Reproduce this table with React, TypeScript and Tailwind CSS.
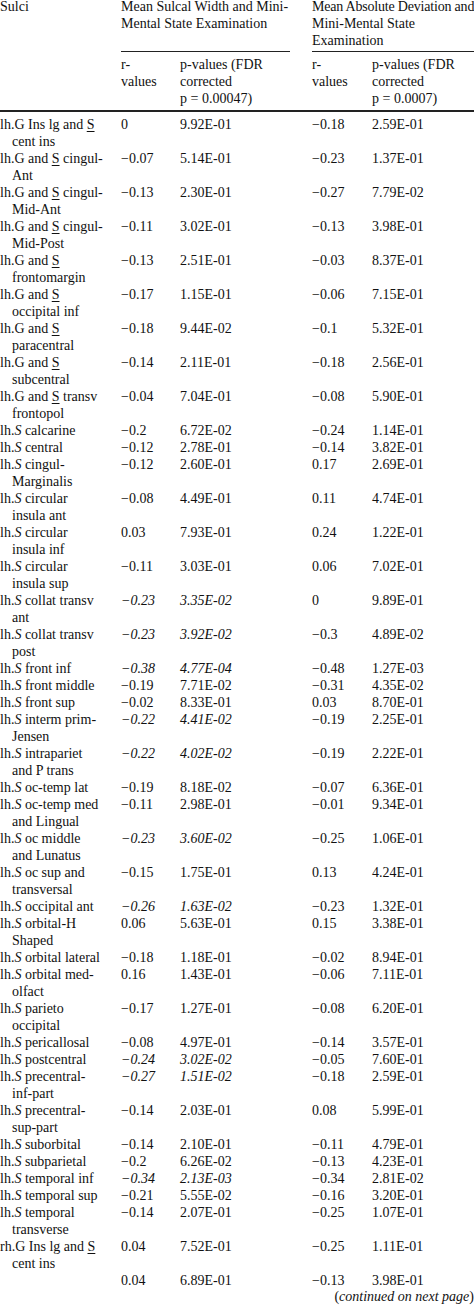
import React from "react";

type Row = { l1: React.ReactNode; l2?: string; v: [string, string, string, string]; it?: boolean };

const g = (hemi: string, before: string, after: string, l2?: string) => ({
  l1: (
    <>
      {hemi}.G {before}
      <span className="underline underline-offset-2">S</span>
      {after}
    </>
  ),
  l2,
});

const s = (rest: string, l2?: string) => ({
  l1: (
    <>
      lh.<span className="italic">S</span> {rest}
    </>
  ),
  l2,
});

const M = "\u2212";

const rows: Row[] = [
  { ...g("lh", "Ins lg and ", "", "cent ins"), v: ["0", "9.92E-01", `${M}0.18`, "2.59E-01"] },
  { ...g("lh", "and ", " cingul-", "Ant"), v: [`${M}0.07`, "5.14E-01", `${M}0.23`, "1.37E-01"] },
  { ...g("lh", "and ", " cingul-", "Mid-Ant"), v: [`${M}0.13`, "2.30E-01", `${M}0.27`, "7.79E-02"] },
  { ...g("lh", "and ", " cingul-", "Mid-Post"), v: [`${M}0.11`, "3.02E-01", `${M}0.13`, "3.98E-01"] },
  { ...g("lh", "and ", "", "frontomargin"), v: [`${M}0.13`, "2.51E-01", `${M}0.03`, "8.37E-01"] },
  { ...g("lh", "and ", "", "occipital inf"), v: [`${M}0.17`, "1.15E-01", `${M}0.06`, "7.15E-01"] },
  { ...g("lh", "and ", "", "paracentral"), v: [`${M}0.18`, "9.44E-02", `${M}0.1`, "5.32E-01"] },
  { ...g("lh", "and ", "", "subcentral"), v: [`${M}0.14`, "2.11E-01", `${M}0.18`, "2.56E-01"] },
  { ...g("lh", "and ", " transv", "frontopol"), v: [`${M}0.04`, "7.04E-01", `${M}0.08`, "5.90E-01"] },
  { ...s("calcarine"), v: [`${M}0.2`, "6.72E-02", `${M}0.24`, "1.14E-01"] },
  { ...s("central"), v: [`${M}0.12`, "2.78E-01", `${M}0.14`, "3.82E-01"] },
  { ...s("cingul-", "Marginalis"), v: [`${M}0.12`, "2.60E-01", "0.17", "2.69E-01"] },
  { ...s("circular", "insula ant"), v: [`${M}0.08`, "4.49E-01", "0.11", "4.74E-01"] },
  { ...s("circular", "insula inf"), v: ["0.03", "7.93E-01", "0.24", "1.22E-01"] },
  { ...s("circular", "insula sup"), v: [`${M}0.11`, "3.03E-01", "0.06", "7.02E-01"] },
  { ...s("collat transv", "ant"), v: [`${M}0.23`, "3.35E-02", "0", "9.89E-01"], it: true },
  { ...s("collat transv", "post"), v: [`${M}0.23`, "3.92E-02", `${M}0.3`, "4.89E-02"], it: true },
  { ...s("front inf"), v: [`${M}0.38`, "4.77E-04", `${M}0.48`, "1.27E-03"], it: true },
  { ...s("front middle"), v: [`${M}0.19`, "7.71E-02", `${M}0.31`, "4.35E-02"] },
  { ...s("front sup"), v: [`${M}0.02`, "8.33E-01", "0.03", "8.70E-01"] },
  { ...s("interm prim-", "Jensen"), v: [`${M}0.22`, "4.41E-02", `${M}0.19`, "2.25E-01"], it: true },
  { ...s("intrapariet", "and P trans"), v: [`${M}0.22`, "4.02E-02", `${M}0.19`, "2.22E-01"], it: true },
  { ...s("oc-temp lat"), v: [`${M}0.19`, "8.18E-02", `${M}0.07`, "6.36E-01"] },
  { ...s("oc-temp med", "and Lingual"), v: [`${M}0.11`, "2.98E-01", `${M}0.01`, "9.34E-01"] },
  { ...s("oc middle", "and Lunatus"), v: [`${M}0.23`, "3.60E-02", `${M}0.25`, "1.06E-01"], it: true },
  { ...s("oc sup and", "transversal"), v: [`${M}0.15`, "1.75E-01", "0.13", "4.24E-01"] },
  { ...s("occipital ant"), v: [`${M}0.26`, "1.63E-02", `${M}0.23`, "1.32E-01"], it: true },
  { ...s("orbital-H", "Shaped"), v: ["0.06", "5.63E-01", "0.15", "3.38E-01"] },
  { ...s("orbital lateral"), v: [`${M}0.18`, "1.18E-01", `${M}0.02`, "8.94E-01"] },
  { ...s("orbital med-", "olfact"), v: ["0.16", "1.43E-01", `${M}0.06`, "7.11E-01"] },
  { ...s("parieto", "occipital"), v: [`${M}0.17`, "1.27E-01", `${M}0.08`, "6.20E-01"] },
  { ...s("pericallosal"), v: [`${M}0.08`, "4.97E-01", `${M}0.14`, "3.57E-01"] },
  { ...s("postcentral"), v: [`${M}0.24`, "3.02E-02", `${M}0.05`, "7.60E-01"], it: true },
  { ...s("precentral-", "inf-part"), v: [`${M}0.27`, "1.51E-02", `${M}0.18`, "2.59E-01"], it: true },
  { ...s("precentral-", "sup-part"), v: [`${M}0.14`, "2.03E-01", "0.08", "5.99E-01"] },
  { ...s("suborbital"), v: [`${M}0.14`, "2.10E-01", `${M}0.11`, "4.79E-01"] },
  { ...s("subparietal"), v: [`${M}0.2`, "6.26E-02", `${M}0.13`, "4.23E-01"] },
  { ...s("temporal inf"), v: [`${M}0.34`, "2.13E-03", `${M}0.34`, "2.81E-02"], it: true },
  { ...s("temporal sup"), v: [`${M}0.21`, "5.55E-02", `${M}0.16`, "3.20E-01"] },
  { ...s("temporal", "transverse"), v: [`${M}0.14`, "2.07E-01", `${M}0.25`, "1.07E-01"] },
  { ...g("rh", "Ins lg and ", "", "cent ins"), v: ["0.04", "7.52E-01", `${M}0.25`, "1.11E-01"] },
  { l1: "", v: ["0.04", "6.89E-01", `${M}0.13`, "3.98E-01"] },
];

export default function App() {
  return (
    <div className="w-[474px] h-[1309px] overflow-hidden bg-white text-[#111111] font-['Liberation_Serif',serif] text-[14px] leading-[17px]">
      {/* Header */}
      <div className="-mt-[2px] flex border-b-2 border-[#222222] pb-[3px]">
        <div className="w-[121px] shrink-0">Sulci</div>
        <div className="flex flex-1">
          <div className="w-[191px] shrink-0">
            <div className="mr-[22px] border-b border-[#222222] pb-[2px] whitespace-nowrap">
              <div>Mean Sulcal Width and Mini-</div>
              <div>Mental State Examination</div>
              <div>&nbsp;</div>
            </div>
            <div className="flex pt-[4px] whitespace-nowrap">
              <div className="w-[59px] shrink-0">
                <div>r-</div>
                <div>values</div>
              </div>
              <div>
                <div>p-values (FDR</div>
                <div>corrected</div>
                <div>p = 0.00047)</div>
              </div>
            </div>
          </div>
          <div className="flex-1 whitespace-nowrap">
            <div className="border-b border-[#222222] pb-[2px]">
              <div className="tracking-[-0.2px]">Mean Absolute Deviation and</div>
              <div>Mini-Mental State</div>
              <div>Examination</div>
            </div>
            <div className="flex pt-[4px]">
              <div className="w-[60px] shrink-0">
                <div>r-</div>
                <div>values</div>
              </div>
              <div>
                <div>p-values (FDR</div>
                <div>corrected</div>
                <div>p = 0.0007)</div>
              </div>
            </div>
          </div>
        </div>
      </div>

      {/* Body */}
      <div className="pt-[4px]">
        {rows.map((r, i) => (
          <div key={i} className="grid grid-cols-[121px_59px_132px_60px_102px] whitespace-nowrap">
            <div>
              <div>{r.l1 === "" ? "\u00a0" : r.l1}</div>
              {r.l2 && <div className="pl-[12px]">{r.l2}</div>}
            </div>
            <div className={r.it ? "italic" : ""}>{r.v[0]}</div>
            <div className={r.it ? "italic" : ""}>{r.v[1]}</div>
            <div>{r.v[2]}</div>
            <div>{r.v[3]}</div>
          </div>
        ))}
      </div>

      <div className="text-right whitespace-nowrap leading-[16px]">
        (<span className="italic">continued on next page</span>)
      </div>
    </div>
  );
}
